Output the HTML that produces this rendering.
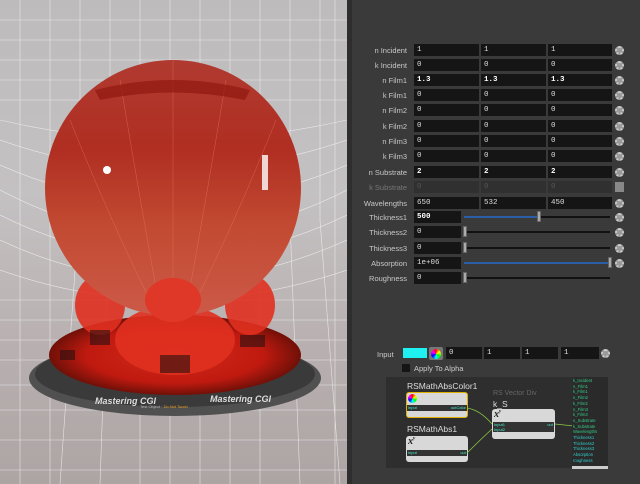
<!DOCTYPE html>
<html><head><style>
*{margin:0;padding:0;box-sizing:border-box}
body{width:640px;height:484px;overflow:hidden;background:#3a3a3a;font-family:"Liberation Sans",sans-serif;position:relative}
#render{position:absolute;left:0;top:0;width:347px;height:484px;overflow:hidden;
background:linear-gradient(180deg,#bdbbbc 0%,#c4c1c2 40%,#b9b1b1 70%,#ada4a4 100%)}
#sep{position:absolute;left:347px;top:0;width:5px;height:484px;background:#2e2e2e}
.lbl{position:absolute;font-size:7.5px;color:#c8c8c8;text-align:right;width:70px;left:337px}
.f{position:absolute;height:12px;background:#151515;color:#ddd;font-family:"Liberation Mono",monospace;font-size:7.5px;padding-left:3px;line-height:12px}
.g{position:absolute;left:615px;width:9px;height:9px;border-radius:50%;border:2px dotted #ccc;background:#999}
.sl{position:absolute;height:2px;background:#111;left:464px;width:146px}
.hd{position:absolute;width:4px;height:11px;background:#aaa;border:1px solid #666}
.node{position:absolute;background:#d8d8d8;border-radius:3px}
.nt{position:absolute;color:#ddd;font-size:8.5px}
</style></head><body>
<div id="render">
<svg width="347" height="484" viewBox="0 0 347 484">
<defs>
<linearGradient id="sph" x1="0" y1="0" x2="0" y2="1">
<stop offset="0" stop-color="#b03a30"/><stop offset="0.35" stop-color="#b02e22"/><stop offset="0.65" stop-color="#c24a32"/><stop offset="1" stop-color="#cc5a48"/></linearGradient>
<radialGradient id="base" cx="0.5" cy="0.5" r="0.5"><stop offset="0" stop-color="#d02818"/><stop offset="0.7" stop-color="#c01a10"/><stop offset="1" stop-color="#701008"/></radialGradient>
</defs>
<g stroke="#f4f4f4" stroke-width="0.6" fill="none" opacity="0.8">
<path d="M0 20H347M0 40H347M0 60H347M0 80H347M0 100H347M0 120 Q170 160 347 120M0 140 Q170 200 347 140M0 165 Q170 240 347 165M0 190Q170 280 347 190M0 215Q170 300 347 215M0 240Q170 320 347 240M0 270Q170 330 347 270M0 300H347M0 320H347M0 340H347M0 360H347M0 385H347M0 410H347M0 440H347M0 470H347"/>
<path d="M20 0V484M50 0 V484M80 0V200L60 484M110 0V200L100 484M140 0V484M170 0V484M200 0V484M230 0V484M260 0V484M290 0V220L300 484M320 0V220L340 484M335 0V484"/>
</g>
<ellipse cx="175" cy="378" rx="146" ry="38" fill="#505050"/>
<ellipse cx="175" cy="374" rx="140" ry="33" fill="#3a3a3a"/>
<ellipse cx="175" cy="355" rx="126" ry="40" fill="url(#base)"/>
<g fill="#e03020" opacity="0.9">
<ellipse cx="100" cy="305" rx="25" ry="30"/><ellipse cx="250" cy="305" rx="25" ry="30"/><ellipse cx="175" cy="340" rx="60" ry="35"/>
</g>
<g fill="#2a1010" opacity="0.6"><rect x="90" y="330" width="20" height="15"/><rect x="240" y="335" width="25" height="12"/><rect x="160" y="355" width="30" height="18"/><rect x="60" y="350" width="15" height="10"/></g>
<circle cx="173" cy="188" r="128" fill="url(#sph)"/>
<g stroke="#e88060" stroke-width="0.5" fill="none" opacity="0.6"><path d="M173 60 V316M120 80 Q140 200 160 310M226 80 Q206 200 186 310M70 120 Q110 220 150 300M276 120 Q236 220 196 300"/></g>
<path d="M95 90 Q173 70 250 90 L245 100 Q173 85 100 100Z" fill="#901810" opacity="0.7"/>
<ellipse cx="173" cy="300" rx="28" ry="22" fill="#e03828"/>
<circle cx="107" cy="170" r="4" fill="#fff"/>
<rect x="262" y="155" width="6" height="35" fill="#fff" opacity="0.8"/>
<text x="95" y="404" font-size="9" font-style="italic" font-weight="bold" fill="#ddd" font-family="Liberation Sans">Mastering CGI</text>
<text x="210" y="402" font-size="9" font-style="italic" font-weight="bold" fill="#ddd" font-family="Liberation Sans">Mastering CGI</text>
<text x="140" y="408" font-size="4" fill="#bbb" font-family="Liberation Sans">Test Object · <tspan fill="#e9a020">Do Not Touch</tspan></text>
</svg>
</div>
<div id="sep"></div>

<div class="lbl" style="top:46px">n Incident</div>
<div class="f" style="left:414px;top:44px;width:65px">1</div><div class="f" style="left:481px;top:44px;width:65px">1</div><div class="f" style="left:548px;top:44px;width:64px">1</div><div class="g" style="top:46px"></div>
<div class="lbl" style="top:61px">k Incident</div>
<div class="f" style="left:414px;top:59px;width:65px">0</div><div class="f" style="left:481px;top:59px;width:65px">0</div><div class="f" style="left:548px;top:59px;width:64px">0</div><div class="g" style="top:61px"></div>
<div class="lbl" style="top:76px">n Film1</div>
<div class="f" style="left:414px;top:74px;width:65px;font-weight:bold;color:#fff">1.3</div><div class="f" style="left:481px;top:74px;width:65px;font-weight:bold;color:#fff">1.3</div><div class="f" style="left:548px;top:74px;width:64px;font-weight:bold;color:#fff">1.3</div><div class="g" style="top:76px"></div>
<div class="lbl" style="top:91px">k Film1</div>
<div class="f" style="left:414px;top:89px;width:65px">0</div><div class="f" style="left:481px;top:89px;width:65px">0</div><div class="f" style="left:548px;top:89px;width:64px">0</div><div class="g" style="top:91px"></div>
<div class="lbl" style="top:106px">n Film2</div>
<div class="f" style="left:414px;top:104px;width:65px">0</div><div class="f" style="left:481px;top:104px;width:65px">0</div><div class="f" style="left:548px;top:104px;width:64px">0</div><div class="g" style="top:106px"></div>
<div class="lbl" style="top:122px">k Film2</div>
<div class="f" style="left:414px;top:120px;width:65px">0</div><div class="f" style="left:481px;top:120px;width:65px">0</div><div class="f" style="left:548px;top:120px;width:64px">0</div><div class="g" style="top:122px"></div>
<div class="lbl" style="top:137px">n Film3</div>
<div class="f" style="left:414px;top:135px;width:65px">0</div><div class="f" style="left:481px;top:135px;width:65px">0</div><div class="f" style="left:548px;top:135px;width:64px">0</div><div class="g" style="top:137px"></div>
<div class="lbl" style="top:152px">k Film3</div>
<div class="f" style="left:414px;top:150px;width:65px">0</div><div class="f" style="left:481px;top:150px;width:65px">0</div><div class="f" style="left:548px;top:150px;width:64px">0</div><div class="g" style="top:152px"></div>
<div class="lbl" style="top:168px">n Substrate</div>
<div class="f" style="left:414px;top:166px;width:65px;font-weight:bold;color:#fff">2</div><div class="f" style="left:481px;top:166px;width:65px;font-weight:bold;color:#fff">2</div><div class="f" style="left:548px;top:166px;width:64px;font-weight:bold;color:#fff">2</div><div class="g" style="top:168px"></div>
<div class="lbl" style="top:183px;color:#777">k Substrate</div>
<div class="f" style="left:414px;top:181px;width:65px;background:#303030;color:#555">0</div><div class="f" style="left:481px;top:181px;width:65px;background:#303030;color:#555">0</div><div class="f" style="left:548px;top:181px;width:64px;background:#303030;color:#555">0</div><div style="position:absolute;left:615px;top:182px;width:9px;height:10px;background:#888"></div>
<div class="lbl" style="top:199px">Wavelengths</div>
<div class="f" style="left:414px;top:197px;width:65px">650</div><div class="f" style="left:481px;top:197px;width:65px">532</div><div class="f" style="left:548px;top:197px;width:64px">450</div><div class="g" style="top:199px"></div>

<div class="lbl" style="top:213px">Thickness1</div>
<div class="f" style="left:414px;top:211px;width:47px;font-weight:bold;color:#fff">500</div><div class="sl" style="top:216px"></div><div class="sl" style="top:216px;width:75px;background:#2a5fa8"></div><div class="hd" style="left:537px;top:211px"></div><div class="g" style="top:213px"></div>
<div class="lbl" style="top:228px">Thickness2</div>
<div class="f" style="left:414px;top:226px;width:47px">0</div><div class="sl" style="top:231px"></div><div class="hd" style="left:463px;top:226px"></div><div class="g" style="top:228px"></div>
<div class="lbl" style="top:244px">Thickness3</div>
<div class="f" style="left:414px;top:242px;width:47px">0</div><div class="sl" style="top:247px"></div><div class="hd" style="left:463px;top:242px"></div><div class="g" style="top:244px"></div>
<div class="lbl" style="top:259px">Absorption</div>
<div class="f" style="left:414px;top:257px;width:47px">1e+06</div><div class="sl" style="top:262px;background:#2a5fa8"></div><div class="hd" style="left:608px;top:257px"></div><div class="g" style="top:259px"></div>
<div class="lbl" style="top:274px">Roughness</div>
<div class="f" style="left:414px;top:272px;width:47px">0</div><div class="sl" style="top:277px"></div><div class="hd" style="left:463px;top:272px"></div>

<div style="position:absolute;left:377px;top:350px;font-size:7.5px;color:#ccc">Input</div>
<div style="position:absolute;left:403px;top:348px;width:24px;height:10px;background:#1ff0f0"></div>
<div style="position:absolute;left:429px;top:347px;width:14px;height:13px;background:#777;border-radius:2px"><div style="margin:2px;width:10px;height:10px;border-radius:50%;background:conic-gradient(red,yellow,lime,cyan,blue,magenta,red)"></div></div>
<div class="f" style="left:446px;top:347px;width:36px">0</div><div class="f" style="left:484px;top:347px;width:36px">1</div><div class="f" style="left:522px;top:347px;width:36px">1</div><div class="f" style="left:561px;top:347px;width:38px">1</div><div class="g" style="left:601px;top:349px"></div>
<div style="position:absolute;left:402px;top:364px;width:8px;height:8px;background:#151515"></div>
<div style="position:absolute;left:414px;top:364px;font-size:7.5px;color:#ccc">Apply To Alpha</div>

<div style="position:absolute;left:386px;top:377px;width:222px;height:91px;background:#2e2e2e"></div>
<div class="nt" style="left:407px;top:381px">RSMathAbsColor1</div>
<div class="node" style="left:406px;top:392px;width:62px;height:26px;border:1.5px solid #e0b000"></div>
<div style="position:absolute;left:408px;top:394px;width:9px;height:9px;border-radius:50%;background:conic-gradient(red,yellow,lime,cyan,blue,magenta,red)"></div>
<div style="position:absolute;left:407px;top:405px;width:60px;height:6px;background:#333;font-size:4px;color:#4ec">&nbsp;input<span style="float:right">outColor&nbsp;</span></div>
<div class="nt" style="left:407px;top:424px">RSMathAbs1</div>
<div class="node" style="left:406px;top:436px;width:62px;height:26px"></div>
<div style="position:absolute;left:408px;top:436px;font-family:'Liberation Serif',serif;font-style:italic;font-weight:bold;font-size:10px;color:#222">x<sup style="font-size:5px">y</sup></div>
<div style="position:absolute;left:407px;top:450px;width:60px;height:6px;background:#333;font-size:4px;color:#4ec">&nbsp;input<span style="float:right">out&nbsp;</span></div>
<div class="nt" style="left:493px;top:390px;color:#666;font-size:7px">RS Vector Div</div>
<div class="nt" style="left:493px;top:399px">k_S</div>
<div class="node" style="left:492px;top:409px;width:63px;height:30px"></div>
<div style="position:absolute;left:494px;top:409px;font-family:'Liberation Serif',serif;font-style:italic;font-weight:bold;font-size:10px;color:#222">x<sup style="font-size:5px">y</sup></div>
<div style="position:absolute;left:493px;top:422px;width:61px;height:10px;background:#333;font-size:4px;color:#4ec;line-height:5px">&nbsp;input1<span style="float:right">out&nbsp;</span><br>&nbsp;input2</div>
<svg style="position:absolute;left:0;top:0" width="640" height="484"><path d="M467 408 Q480 410 492 424M467 453 Q480 440 492 429M555 424 L574 426" stroke="#8c4" fill="none" stroke-width="0.8"/></svg>
<div style="position:absolute;left:572px;top:377px;width:36px;height:91px;background:#2a2a2a"></div>
<div style="position:absolute;left:573px;top:378px;font-size:4.2px;line-height:5.7px;color:#3c8">k_Incident<br>n_Film1<br>k_Film1<br>n_Film2<br>k_Film2<br>n_Film3<br>k_Film3<br>n_Substrate<br>k_Substrate<br>Wavelengths<br><span style="color:#3cc">Thickness1<br>Thickness2<br>Thickness3<br>Absorption<br>roughness</span></div>
<div style="position:absolute;left:572px;top:466px;width:36px;height:3px;background:#ccc"></div>
</body></html>
